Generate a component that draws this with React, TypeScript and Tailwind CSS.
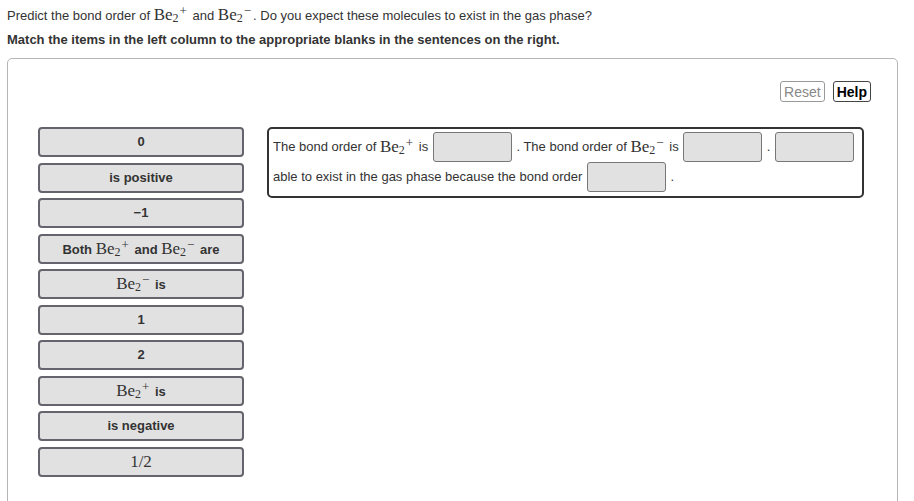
import React from "react"

const sans = { fontFamily: '"Liberation Sans", Arial, sans-serif' }

function Be({ charge }: { charge: "+" | "−" }) {
  return (
    <span className="font-normal text-[17px]" style={{ fontFamily: '"Liberation Serif", "Times New Roman", serif' }}>
      Be<sub className="text-[12px] align-baseline relative top-[2px]">2</sub>
      <sup className="text-[13px] align-baseline relative -top-[5px] ml-[1px] mr-[2px]">{charge}</sup>
    </span>
  )
}

function Blank() {
  return <span className="inline-block w-[79px] h-[30px] align-middle bg-[#e1e1e1] border border-[#777] rounded-[3px] mx-[1px]" />
}

const items: React.ReactNode[] = [
  "0",
  "is positive",
  "−1",
  <>Both <Be charge="+" /> and <Be charge="−" /> are</>,
  <><Be charge="−" /> is</>,
  "1",
  "2",
  <><Be charge="+" /> is</>,
  "is negative",
  <span className="font-normal text-[17px]" style={{ fontFamily: '"Liberation Serif", serif' }}>1/2</span>,
]

export default function App() {
  return (
    <div className="w-[914px] h-[501px] overflow-hidden bg-white text-[#333] text-[13px]" style={sans}>
      <p className="pl-[7px] pt-[5px] leading-[20px]">
        Predict the bond order of <Be charge="+" /> and <Be charge="−" />. Do you expect these molecules to exist in the gas phase?
      </p>
      <p className="pl-[7px] pt-[4px] font-bold leading-[20px]">
        Match the items in the left column to the appropriate blanks in the sentences on the right.
      </p>

      <div className="mt-[8px] ml-[7px] w-[891px] h-[460px] border border-[#b5b5b5] rounded-[5px]">
        <div className="flex justify-end gap-[8px] pr-[26px] pt-[22px]">
          <button className="px-[3px] h-[21px] border border-[#999] rounded-[3px] text-[#888] text-[14px] leading-none">Reset</button>
          <button className="px-[3px] h-[21px] border border-[#444] rounded-[3px] text-black font-bold text-[14px] leading-none">Help</button>
        </div>

        <div className="flex items-start mt-[25px] pl-[30px]">
          <div className="flex flex-col gap-[5.5px] w-[206px]">
            {items.map((it, i) => (
              <div
                key={i}
                className="h-[30px] flex items-center justify-center bg-[#e1e1e1] border-2 border-[#64646c] rounded-[4px] font-bold text-[13px] text-[#333]"
              >
                <span>{it}</span>
              </div>
            ))}
          </div>

          <div className="ml-[23px] w-[597px] h-[71px] border-2 border-[#333] rounded-[5px] pl-[4px] pt-[3px] text-[13px] text-[#333]">
            <div className="h-[30px] flex items-center whitespace-nowrap">
              The bond order of&nbsp;<Be charge="+" />&nbsp;is&nbsp;<Blank />&nbsp;. The bond order of&nbsp;<Be charge="−" />&nbsp;is&nbsp;<Blank />&nbsp;.&nbsp;<Blank />
            </div>
            <div className="h-[30px] flex items-center whitespace-nowrap">
              able to exist in the gas phase because the bond order&nbsp;<Blank />&nbsp;.
            </div>
          </div>
        </div>
      </div>
    </div>
  )
}
